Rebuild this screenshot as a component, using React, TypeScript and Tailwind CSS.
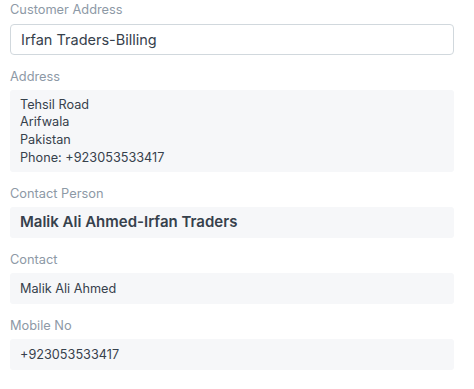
const fields = [
  { label: 'Contact Person', value: 'Malik Ali Ahmed-Irfan Traders', bold: true },
  { label: 'Contact', value: 'Malik Ali Ahmed' },
  { label: 'Mobile No', value: '+923053533417' },
];

const labelClass = 'text-[12.8px] leading-[18px] text-[#8d99a6]';
const boxClass = 'w-[444px] rounded-[3px] bg-[#f6f7f9] px-[10px]';

export default function App() {
  return (
    <div className="w-[474px] h-[389px] bg-white px-[10px] pt-[1px] font-['Inter',sans-serif] text-[#36414c]">
      <div className={labelClass + ' h-[23px]'}>Customer Address</div>
      <div className="flex h-[31px] w-[444px] items-center rounded-[4px] border border-[#d1d8dd] px-[10px] text-[14.5px]">
        Irfan Traders-Billing
      </div>
      <div className={labelClass + ' h-[35px] pt-[13px]'}>Address</div>
      <div className={boxClass + ' flex h-[82px] flex-col justify-center text-[12.7px] leading-[17.6px]'}>
        <div>Tehsil Road</div>
        <div>Arifwala</div>
        <div>Pakistan</div>
        <div>Phone: +923053533417</div>
      </div>
      {fields.map((f) => (
        <div key={f.label}>
          <div className={labelClass + ' h-[35px] pt-[13px]'}>{f.label}</div>
          <div
            className={
              boxClass +
              ' flex h-[31px] items-center ' +
              (f.bold ? 'text-[15px] font-semibold' : 'text-[12.7px]')
            }
          >
            {f.value}
          </div>
        </div>
      ))}
    </div>
  );
}
